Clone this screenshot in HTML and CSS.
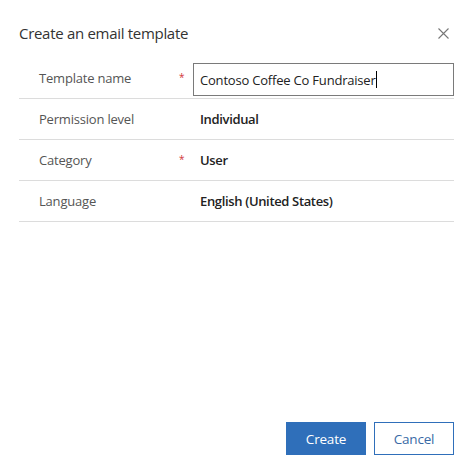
FILE: index.html
```html
<!DOCTYPE html>
<html>
<head>
<meta charset="utf-8">
<link rel="stylesheet" href="styles.css">
</head>
<body>
<div class="dialog">
  <div class="header">
    <div class="title">Create an email template</div>
    <button class="close" aria-label="Close">
      <svg width="11" height="11" viewBox="0 0 11 11"><path d="M0.5 0.5 L10.5 10.5 M10.5 0.5 L0.5 10.5" stroke="#777" stroke-width="1.1" fill="none"/></svg>
    </button>
  </div>
  <div class="form">
    <div class="row">
      <div class="label">Template name</div>
      <div class="req">*</div>
      <div class="field"><div class="input">Contoso Coffee Co Fundraiser<span class="caret"></span></div></div>
    </div>
    <div class="row">
      <div class="label">Permission level</div>
      <div class="req"></div>
      <div class="field"><div class="value">Individual</div></div>
    </div>
    <div class="row">
      <div class="label">Category</div>
      <div class="req">*</div>
      <div class="field"><div class="value">User</div></div>
    </div>
    <div class="row">
      <div class="label">Language</div>
      <div class="req"></div>
      <div class="field"><div class="value">English (United States)</div></div>
    </div>
  </div>
  <div class="spacer"></div>
  <div class="footer">
    <button class="btn primary">Create</button>
    <button class="btn secondary">Cancel</button>
  </div>
</div>
</body>
</html>
```
FILE: styles.css
```css
html, body {
  margin: 0;
  padding: 0;
  background: #fff;
}
body {
  font-family: "Open Sans", "Noto Sans", sans-serif;
  color: #222;
}
.dialog {
  width: 474px;
  height: 474px;
  box-sizing: border-box;
  padding: 20px 20px 19px 19px;
  display: flex;
  flex-direction: column;
}
.header {
  display: flex;
  align-items: center;
  justify-content: space-between;
  height: 26px;
}
.title {
  font-size: 15px;
  color: #333;
  letter-spacing: -0.3px;
}
.close {
  border: 0;
  background: none;
  padding: 0;
  margin-right: 5px;
  width: 11px;
  height: 11px;
  display: flex;
}
.form {
  margin-top: 12px;
}
.row {
  display: flex;
  align-items: center;
  height: 40px;
  border-bottom: 1px solid #dcdcdc;
}
.label {
  width: 140px;
  padding-left: 20px;
  font-size: 13px;
  color: #555;
  letter-spacing: -0.2px;
}
.req {
  width: 14px;
  color: #d13438;
  font-size: 10px;
  align-self: flex-start;
  padding-top: 12px;
}
.field {
  flex: 1;
}
.input {
  height: 31px;
  border: 1px solid #7a7a7a;
  box-sizing: content-box;
  display: flex;
  align-items: center;
  padding-left: 6px;
  font-size: 13px;
  color: #222;
  letter-spacing: -0.2px;
  margin-top: 3px;
}
.caret {
  display: inline-block;
  width: 1px;
  height: 17px;
  background: #000;
}
.value {
  padding-left: 7px;
  font-size: 13px;
  font-weight: 600;
  color: #222;
  letter-spacing: -0.35px;
}
.spacer {
  flex: 1;
}
.footer {
  display: flex;
  justify-content: flex-end;
  gap: 8px;
}
.btn {
  width: 80px;
  height: 33px;
  font-family: inherit;
  font-size: 13.5px;
  box-sizing: border-box;
  cursor: pointer;
  letter-spacing: -0.2px;
}
.primary {
  background: #2f6fba;
  color: #fff;
  border: 1px solid #2f6fba;
}
.secondary {
  background: #fff;
  color: #3a6aa6;
  border: 1px solid #2f6fba;
}
```
